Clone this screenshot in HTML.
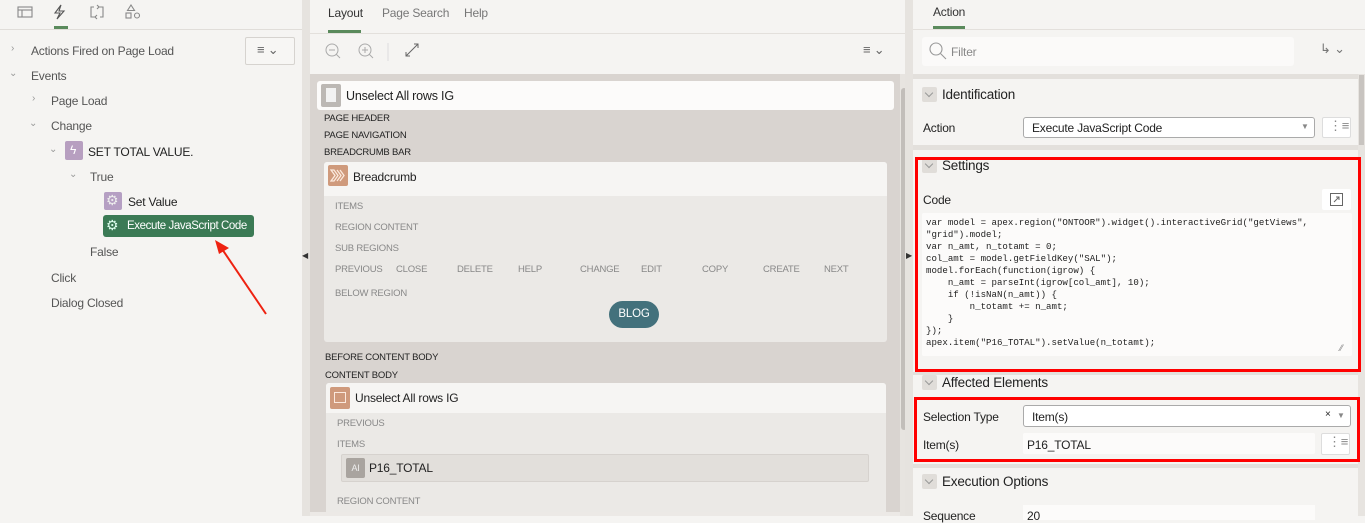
<!DOCTYPE html>
<html><head><meta charset="utf-8"><style>
*{box-sizing:border-box;margin:0;padding:0}
body{width:1365px;height:516px;overflow:hidden;background:#f5f4f2;font-family:"Liberation Sans",sans-serif;font-size:12px;color:#333;position:relative;letter-spacing:-.2px}
.a{position:absolute}
.t{position:absolute;white-space:nowrap}
.mono{font-family:"Liberation Mono",monospace;font-size:9.1px;line-height:12px;color:#222;white-space:pre;letter-spacing:0}
.sm{font-size:9.5px;color:#888;letter-spacing:-.2px}
.bk{font-size:9.5px;color:#222;letter-spacing:-.2px}
.hdr{font-size:13.5px;color:#222}
.chev{position:absolute;width:15px;height:15px;background:#e0ddd9;border-radius:2px}
.chev:after{content:"";position:absolute;left:4px;top:3px;width:5px;height:5px;border-right:1.3px solid #999;border-bottom:1.3px solid #999;transform:rotate(45deg)}
.gt{color:#999;font-size:10px}
</style></head><body>
<!-- left panel -->
<div class="a" style="left:0;top:0;width:302px;height:516px;background:#f5f4f2"></div>
<div class="a" style="left:0;top:29px;width:302px;height:1px;background:#e0ddd9"></div>
<svg class="a" style="left:17px;top:4px" width="130" height="16" viewBox="0 0 130 16" fill="none" stroke="#888" stroke-width="1.1">
<rect x="1" y="3" width="14" height="10"/><line x1="1" y1="6" x2="15" y2="6"/><line x1="5" y1="6" x2="5" y2="13"/>
<path d="M44 1 L38 9 L43 9 L40 15 L47 7 L42 7 Z" stroke="#555"/>
<path d="M77 3 h-3 v10 h4 M83 13 h3 v-10 h-4 M80 11 l-2 2 l2 2 M80 1 l2 2 l-2 2"/>
<path d="M114 1 l3.5 5.5 h-7 z"/><rect x="109" y="9" width="5" height="5"/><circle cx="120" cy="11.5" r="2.5"/>
</svg>
<div class="a" style="left:54px;top:26px;width:14px;height:3px;background:#5a8a5c"></div>
<div class="a" style="left:245px;top:37px;width:50px;height:28px;border:1px solid #d6d3cf;border-radius:2px;background:#f7f6f4"></div>
<div class="t" style="left:257px;top:42px;color:#666;font-size:13px">≡ ⌄</div>
<div class="t gt" style="left:11px;top:43px">›</div>
<div class="t" style="left:31px;top:44px;color:#555">Actions Fired on Page Load</div>
<div class="t gt" style="left:9px;top:68px">⌄</div>
<div class="t" style="left:31px;top:69px;color:#555">Events</div>
<div class="t gt" style="left:32px;top:93px">›</div>
<div class="t" style="left:51px;top:94px;color:#555">Page Load</div>
<div class="t gt" style="left:29px;top:118px">⌄</div>
<div class="t" style="left:51px;top:119px;color:#555">Change</div>
<div class="t gt" style="left:49px;top:144px">⌄</div>
<div class="a" style="left:65px;top:141px;width:18px;height:19px;background:#b79fc0;border-radius:2px"></div>
<div class="t" style="left:70px;top:143px;color:#fff;font-size:12px">ϟ</div>
<div class="t" style="left:88px;top:145px;color:#222">SET TOTAL VALUE.</div>
<div class="t gt" style="left:69px;top:169px">⌄</div>
<div class="t" style="left:90px;top:170px;color:#555">True</div>
<div class="a" style="left:104px;top:192px;width:18px;height:18px;background:#b59fc3;border-radius:2px"></div>
<div class="t" style="left:106px;top:192px;color:#eee;font-size:14px">⚙</div>
<div class="t" style="left:128px;top:195px;color:#222">Set Value</div>
<div class="a" style="left:103px;top:215px;width:151px;height:22px;background:#3b7a55;border-radius:3px"></div>
<div class="t" style="left:106px;top:217px;color:#dfe;font-size:14px">⚙</div>
<div class="t" style="left:127px;top:220px;color:#fff;font-size:11.5px;letter-spacing:-.4px">Execute JavaScript Code</div>
<div class="t" style="left:90px;top:245px;color:#555">False</div>
<div class="t" style="left:51px;top:271px;color:#555">Click</div>
<div class="t" style="left:51px;top:296px;color:#555">Dialog Closed</div>
<svg class="a" style="left:210px;top:238px" width="60" height="80"><line x1="56" y1="76" x2="10" y2="8" stroke="#e21" stroke-width="2"/><path d="M5 2 L19 10 L9 16 Z" fill="#e21"/></svg>
<!-- splitter -->
<div class="a" style="left:302px;top:0;width:8px;height:516px;background:#e6e3df"></div>
<div class="t" style="left:302px;top:251px;font-size:8px;color:#333">◀</div>
<!-- center -->
<div class="a" style="left:310px;top:0;width:595px;height:516px;background:#f5f4f2"></div>
<div class="a" style="left:310px;top:33px;width:595px;height:1px;background:#e3e0dc"></div>
<div class="t" style="left:328px;top:6px;color:#333">Layout</div>
<div class="a" style="left:328px;top:30px;width:33px;height:3px;background:#5a8a5c"></div>
<div class="t" style="left:382px;top:6px;color:#777">Page Search</div>
<div class="t" style="left:464px;top:6px;color:#777">Help</div>
<svg class="a" style="left:325px;top:43px" width="100" height="18" fill="none" stroke="#aaa" stroke-width="1">
<circle cx="7" cy="7" r="6"/><line x1="11" y1="11" x2="15" y2="15"/><line x1="4" y1="7" x2="10" y2="7"/>
<circle cx="40" cy="7" r="6"/><line x1="44" y1="11" x2="48" y2="15"/><line x1="37" y1="7" x2="43" y2="7"/><line x1="40" y1="4" x2="40" y2="10"/>
<line x1="63" y1="0" x2="63" y2="32" stroke="#ddd"/>
</svg>
<svg class="a" style="left:405px;top:43px" width="14" height="14" fill="none" stroke="#666" stroke-width="1"><path d="M1 13 L13 1 M9 1 H13 V5 M1 9 V13 H5"/></svg>
<div class="t" style="left:863px;top:42px;color:#666;font-size:13px">≡ ⌄</div>
<div class="a" style="left:310px;top:74px;width:590px;height:442px;background:#d9d4d0"></div>
<div class="a" style="left:900px;top:74px;width:8px;height:442px;background:#e7e4e0"></div>
<div class="a" style="left:901px;top:88px;width:6px;height:342px;background:#c2beba;border-radius:3px"></div>
<div class="a" style="left:317px;top:81px;width:577px;height:29px;background:#fcfbfa;border-radius:3px"></div>
<div class="a" style="left:321px;top:84px;width:20px;height:23px;background:#bcb8b4;border-radius:2px"></div>
<div class="a" style="left:326px;top:88px;width:10px;height:14px;background:#f2f2f2"></div>
<div class="t" style="left:346px;top:89px;color:#222;font-size:12.5px">Unselect All rows IG</div>
<div class="t bk" style="left:324px;top:113px">PAGE HEADER</div>
<div class="t bk" style="left:324px;top:130px">PAGE NAVIGATION</div>
<div class="t bk" style="left:324px;top:147px">BREADCRUMB BAR</div>
<div class="a" style="left:324px;top:162px;width:563px;height:180px;background:#ebe9e6;border-radius:3px"></div>
<div class="a" style="left:324px;top:162px;width:563px;height:34px;background:#f6f5f3;border-radius:3px 3px 0 0"></div>
<div class="a" style="left:328px;top:165px;width:20px;height:21px;background:#cf9a7c;border-radius:2px"></div>
<svg class="a" style="left:330px;top:169px" width="16" height="13" fill="none" stroke="#fbe9dd" stroke-width="1.3"><path d="M1 1 h3 l4 5.5 l-4 5.5 h-3 l4 -5.5 z M7 1 l4 5.5 l-4 5.5 M10 1 l4 5.5 l-4 5.5"/></svg>
<div class="t" style="left:353px;top:170px;color:#222;font-size:12px">Breadcrumb</div>
<div class="t sm" style="left:335px;top:201px">ITEMS</div>
<div class="t sm" style="left:335px;top:222px">REGION CONTENT</div>
<div class="t sm" style="left:335px;top:243px">SUB REGIONS</div>
<div class="t sm" style="left:335px;top:264px">PREVIOUS</div>
<div class="t sm" style="left:396px;top:264px">CLOSE</div>
<div class="t sm" style="left:457px;top:264px">DELETE</div>
<div class="t sm" style="left:518px;top:264px">HELP</div>
<div class="t sm" style="left:580px;top:264px">CHANGE</div>
<div class="t sm" style="left:641px;top:264px">EDIT</div>
<div class="t sm" style="left:702px;top:264px">COPY</div>
<div class="t sm" style="left:763px;top:264px">CREATE</div>
<div class="t sm" style="left:824px;top:264px">NEXT</div>
<div class="t sm" style="left:335px;top:288px">BELOW REGION</div>
<div class="a" style="left:609px;top:301px;width:50px;height:27px;background:#43717c;border-radius:14px;color:#fff;font-size:11.5px;text-align:center;line-height:27px">BLOG</div>
<div class="t bk" style="left:325px;top:352px">BEFORE CONTENT BODY</div>
<div class="t bk" style="left:325px;top:370px">CONTENT BODY</div>
<div class="a" style="left:326px;top:383px;width:560px;height:133px;background:#ebe9e6;border-radius:3px"></div>
<div class="a" style="left:326px;top:383px;width:560px;height:30px;background:#f6f5f3;border-radius:3px 3px 0 0"></div>
<div class="a" style="left:330px;top:387px;width:20px;height:22px;background:#cf9a7c;border-radius:2px"></div>
<div class="a" style="left:334px;top:392px;width:12px;height:11px;border:1.5px solid #fbe9dd"></div>
<div class="t" style="left:355px;top:391px;color:#222;font-size:12px">Unselect All rows IG</div>
<div class="t sm" style="left:337px;top:418px">PREVIOUS</div>
<div class="t sm" style="left:337px;top:439px">ITEMS</div>
<div class="a" style="left:341px;top:454px;width:528px;height:28px;background:#e2dfdb;border:1px solid #d6d2ce;border-radius:2px"></div>
<div class="a" style="left:346px;top:458px;width:19px;height:20px;background:#a9a49f;border-radius:2px;color:#eee;font-size:9px;text-align:center;line-height:20px">AI</div>
<div class="t" style="left:369px;top:461px;color:#222;font-size:12px">P16_TOTAL</div>
<div class="t sm" style="left:337px;top:496px">REGION CONTENT</div>
<div class="a" style="left:310px;top:512px;width:590px;height:4px;background:#ece9e6"></div>
<!-- splitter -->
<div class="a" style="left:905px;top:0;width:8px;height:516px;background:#e6e3df"></div>
<div class="t" style="left:906px;top:251px;font-size:8px;color:#333">▶</div>
<!-- right -->
<div class="a" style="left:913px;top:0;width:452px;height:516px;background:#f5f4f2"></div>
<div class="a" style="left:913px;top:29px;width:452px;height:1px;background:#e3e0dc"></div>
<div class="t" style="left:933px;top:5px;color:#333">Action</div>
<div class="a" style="left:933px;top:26px;width:32px;height:3px;background:#5a8a5c"></div>
<div class="a" style="left:922px;top:37px;width:372px;height:29px;background:#fbfaf9;border-radius:3px"></div>
<svg class="a" style="left:929px;top:42px" width="18" height="18" fill="none" stroke="#999" stroke-width="1.1"><circle cx="7" cy="7" r="6"/><line x1="11.5" y1="11.5" x2="17" y2="17"/></svg>
<div class="t" style="left:951px;top:45px;color:#888">Filter</div>
<div class="t" style="left:1320px;top:41px;color:#777;font-size:13px">↳ ⌄</div>
<div class="a" style="left:913px;top:74px;width:452px;height:5px;background:#e3e0dc"></div>
<div class="a" style="left:1358px;top:74px;width:7px;height:442px;background:#e7e4e0"></div>
<div class="a" style="left:1359px;top:75px;width:5px;height:70px;background:#c8c4c0"></div>
<div class="chev" style="left:922px;top:87px"></div>
<div class="t hdr" style="left:942px;top:87px">Identification</div>
<div class="t" style="left:923px;top:121px;color:#222">Action</div>
<div class="a" style="left:1023px;top:117px;width:292px;height:21px;border:1px solid #aaa;border-radius:3px;background:#fff"></div>
<div class="t" style="left:1032px;top:121px;color:#222">Execute JavaScript Code</div>
<div class="t" style="left:1301px;top:122px;color:#888;font-size:8px">▼</div>
<div class="a" style="left:1322px;top:117px;width:29px;height:21px;background:#fff;border:1px solid #ddd;border-radius:2px"></div>
<div class="t" style="left:1329px;top:118px;color:#888;font-size:13px">⋮≡</div>
<div class="a" style="left:913px;top:145px;width:445px;height:5px;background:#e3e0dc"></div>
<div class="chev" style="left:922px;top:158px"></div>
<div class="t hdr" style="left:942px;top:158px">Settings</div>
<div class="t" style="left:923px;top:193px;color:#222">Code</div>
<div class="a" style="left:1322px;top:189px;width:29px;height:21px;background:#fff;border-radius:2px"></div>
<svg class="a" style="left:1330px;top:193px" width="13" height="13" fill="none" stroke="#666"><rect x="0.5" y="0.5" width="12" height="12"/><path d="M4 9 L9 4 M6 4 H9 V7"/></svg>
<div class="a" style="left:922px;top:213px;width:430px;height:143px;background:#fcfbfa;border-radius:2px"></div>
<div class="t mono" style="left:926px;top:217px">var model = apex.region("ONTOOR").widget().interactiveGrid("getViews",
"grid").model;
var n_amt, n_totamt = 0;
col_amt = model.getFieldKey("SAL");
model.forEach(function(igrow) {
    n_amt = parseInt(igrow[col_amt], 10);
    if (!isNaN(n_amt)) {
        n_totamt += n_amt;
    }
});
apex.item("P16_TOTAL").setValue(n_totamt);</div>
<div class="t" style="left:1340px;top:343px;color:#888;font-size:9px">⁄⁄</div>
<div class="a" style="left:915px;top:157px;width:446px;height:215px;border:3px solid #f00"></div>
<div class="a" style="left:913px;top:372px;width:445px;height:3px;background:#e3e0dc"></div>
<div class="chev" style="left:922px;top:375px"></div>
<div class="t hdr" style="left:942px;top:375px">Affected Elements</div>
<div class="a" style="left:1023px;top:405px;width:328px;height:22px;border:1px solid #aaa;border-radius:3px;background:#fff"></div>
<div class="t" style="left:1032px;top:410px;color:#222">Item(s)</div>
<div class="t" style="left:1325px;top:409px;color:#222;font-size:10px">×</div>
<div class="t" style="left:1337px;top:411px;color:#888;font-size:8px">▼</div>
<div class="t" style="left:923px;top:410px;color:#222">Selection Type</div>
<div class="t" style="left:923px;top:438px;color:#222">Item(s)</div>
<div class="a" style="left:1023px;top:433px;width:292px;height:21px;background:#fcfbfa;border-radius:2px"></div>
<div class="t" style="left:1027px;top:438px;color:#222">P16_TOTAL</div>
<div class="a" style="left:1321px;top:433px;width:29px;height:22px;background:#fff;border:1px solid #ddd;border-radius:2px"></div>
<div class="t" style="left:1328px;top:434px;color:#888;font-size:13px">⋮≡</div>
<div class="a" style="left:914px;top:397px;width:446px;height:65px;border:3px solid #f00"></div>
<div class="a" style="left:913px;top:464px;width:445px;height:4px;background:#e3e0dc"></div>
<div class="chev" style="left:922px;top:474px"></div>
<div class="t hdr" style="left:942px;top:474px">Execution Options</div>
<div class="t" style="left:923px;top:509px;color:#222">Sequence</div>
<div class="a" style="left:1023px;top:505px;width:292px;height:15px;background:#fcfbfa"></div>
<div class="t" style="left:1027px;top:509px;color:#222">20</div>
</body></html>
